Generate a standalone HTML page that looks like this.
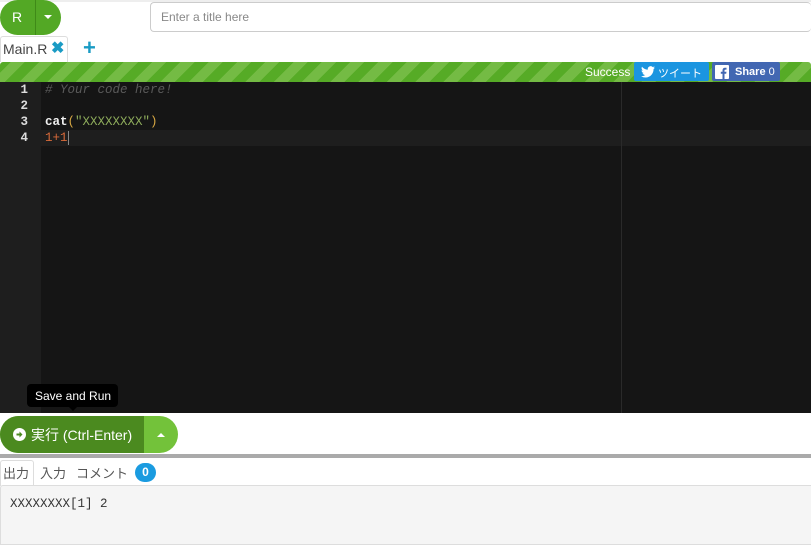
<!DOCTYPE html>
<html><head><meta charset="utf-8"><style>
*{box-sizing:border-box;margin:0;padding:0}
body{width:811px;height:545px;overflow:hidden;background:#fff;font-family:"Liberation Sans","Noto Sans CJK JP",sans-serif;position:relative}
.abs{position:absolute}
.mono{font-family:"Liberation Mono","DejaVu Sans Mono",monospace;font-size:12.5px}
</style></head><body>
<div class="abs" style="left:0;top:0;width:811px;height:2px;background:#eee"></div>
<div class="abs" style="left:0;top:0;width:61px;height:35px;background:#53a825;border-radius:18px;"></div>
<div class="abs" style="left:35px;top:0;width:1px;height:35px;background:#3f8a18"></div>
<div class="abs" style="left:12px;top:9px;color:#fff;font-size:14px">R</div>
<div class="abs" style="left:44px;top:15px;width:0;height:0;border-left:4px solid transparent;border-right:4px solid transparent;border-top:4px solid #fff"></div>
<div class="abs" style="left:150px;top:2px;width:661px;height:30px;border:1px solid #ccc;border-radius:4px;border-right:none;padding:7px 10px;font-size:12px;color:#888">Enter a title here</div>
<div class="abs" style="left:0;top:36px;width:68px;height:26px;border:1px solid #ddd;border-bottom:none;border-radius:3px 3px 0 0;background:#fff"></div>
<div class="abs" style="left:3px;top:41px;font-size:14px;color:#444">Main.R</div>
<div class="abs" style="left:51px;top:38px;font-size:16px;color:#1a9bc4;font-weight:bold">✖</div>
<div class="abs" style="left:83px;top:35px;font-size:22px;color:#1a9bc4;font-weight:bold">+</div>
<div class="abs" style="left:0;top:62px;width:811px;height:20px;background:repeating-linear-gradient(-45deg,#56ab26 0 10px,#74bb44 10px 20px);border-radius:3px 3px 0 0"></div>
<div class="abs" style="left:585px;top:65px;color:#fff;font-size:12px">Success</div>
<div class="abs" style="left:634px;top:62px;width:75px;height:19px;background:#1b95e0;border-radius:2px;color:#fff;font-size:11px;padding:3px 0 0 24px">ツイート</div>
<svg class="abs" style="left:641px;top:66px" width="14" height="12" viewBox="0 0 24 20"><path fill="#fff" d="M24 2.4a10 10 0 0 1-2.8.8A5 5 0 0 0 23.3.4a10 10 0 0 1-3.1 1.2A4.9 4.9 0 0 0 11.8 6 14 14 0 0 1 1.7.9a4.9 4.9 0 0 0 1.5 6.6A4.9 4.9 0 0 1 1 6.9a4.9 4.9 0 0 0 3.9 4.8 5 5 0 0 1-2.2.1 4.9 4.9 0 0 0 4.6 3.4A9.9 9.9 0 0 1 0 17.2 14 14 0 0 0 7.5 19.4c9.1 0 14-7.5 14-14v-.6A10 10 0 0 0 24 2.4z"/></svg>
<div class="abs" style="left:712px;top:62px;width:68px;height:19px;background:#4267b2;border-radius:2px;color:#fff;font-size:11px;padding:4px 0 0 23px;font-weight:bold">Share <span style="font-weight:normal">0</span></div>
<svg class="abs" style="left:715px;top:65px" width="14" height="14" viewBox="0 0 14 14"><rect width="14" height="14" rx="1" fill="#fff"/><path fill="#4267b2" d="M9.5 14V8.8h1.7l.3-2H9.5V5.6c0-.6.2-1 1-1h1V2.8a13 13 0 0 0-1.5-.1c-1.5 0-2.5.9-2.5 2.6v1.5H5.8v2h1.7V14z"/></svg>
<div class="abs" style="left:0;top:82px;width:811px;height:331px;background:#151515"></div>
<div class="abs" style="left:0;top:82px;width:41px;height:331px;background:#1e1e1e"></div>
<div class="abs" style="left:41px;top:130px;width:770px;height:16px;background:#1e1e1e"></div>
<div class="abs" style="left:621px;top:82px;width:1px;height:331px;background:#2a2a2a"></div>
<div class="abs mono" style="left:0;top:82px;width:28px;text-align:right;color:#ddd;line-height:16px;font-weight:bold">1<br>2<br>3<br>4</div>
<div class="abs mono" style="left:45px;top:82px;line-height:16px;color:#eee;white-space:pre"><span style="color:#5a5a5a;font-style:italic"># Your code here!</span>

<b>cat</b><span style="color:#d8a843">(</span><span style="color:#8fad5c">"XXXXXXXX"</span><span style="color:#d8a843">)</span>
<span style="color:#d86a3a">1+1</span><span style="border-left:1px solid #888"></span></div>
<div class="abs" style="left:27px;top:384px;width:91px;height:23px;background:#000;border-radius:4px;color:#fff;font-size:12px;padding:5px 0 0 8px">Save and Run</div>
<div class="abs" style="left:69px;top:407px;border-left:4px solid transparent;border-right:4px solid transparent;border-top:4px solid #000"></div>
<div class="abs" style="left:0;top:416px;width:178px;height:37px;border-radius:19px;background:#73c23a"></div>
<div class="abs" style="left:0;top:416px;width:144px;height:37px;border-radius:19px 0 0 19px;background:#4b8a1f"></div>
<div class="abs" style="left:13px;top:428px;width:13px;height:13px;border-radius:50%;background:#fff"></div>
<svg class="abs" style="left:13px;top:428px" width="13" height="13" viewBox="0 0 13 13"><path d="M3.5 5.5h3V3.5l3 3-3 3v-2h-3z" fill="#4b8a1f"/></svg>
<div class="abs" style="left:31px;top:425px;color:#fff;font-size:14px">実行 (Ctrl-Enter)</div>
<div class="abs" style="left:157px;top:433px;border-left:4px solid transparent;border-right:4px solid transparent;border-bottom:4px solid #fff"></div>
<div class="abs" style="left:0;top:454px;width:811px;height:4px;background:#aaa"></div>
<div class="abs" style="left:0;top:460px;width:34px;height:26px;border:1px solid #ddd;border-bottom:none;border-radius:3px 3px 0 0;background:#fff"></div>
<div class="abs" style="left:3px;top:463px;font-size:13px;color:#555">出力</div>
<div class="abs" style="left:40px;top:463px;font-size:13px;color:#555">入力</div>
<div class="abs" style="left:76px;top:463px;font-size:13px;color:#555">コメント</div>
<div class="abs" style="left:135px;top:463px;width:21px;height:19px;border-radius:10px;background:#1a9be0;color:#fff;font-size:12px;font-weight:bold;text-align:center;line-height:19px">0</div>
<div class="abs" style="left:0;top:485px;width:811px;height:60px;background:#f5f5f5;border:1px solid #ddd;border-right:none;border-radius:3px 0 0 0"></div>
<div class="abs mono" style="left:10px;top:497px;color:#333;font-size:12.5px">XXXXXXXX[1] 2</div>
</body></html>
